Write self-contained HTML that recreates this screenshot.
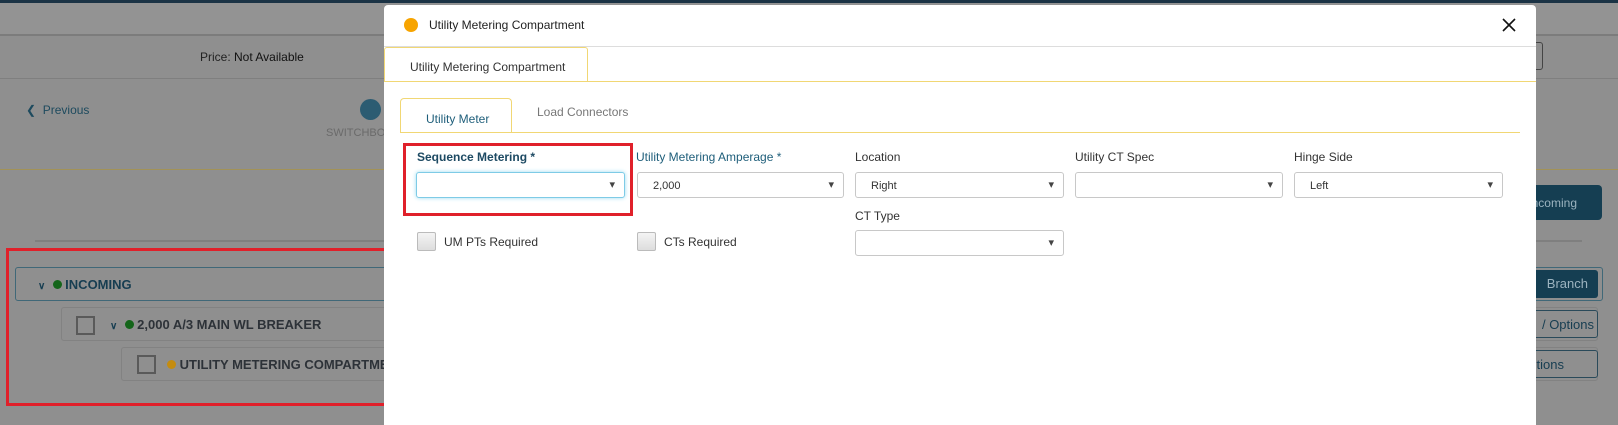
<!DOCTYPE html>
<html><head><meta charset="utf-8"><style>
*{box-sizing:border-box;margin:0;padding:0}
body{width:1618px;height:412px;overflow:hidden;position:relative;background:#8f8f8f;font-family:"Liberation Sans",sans-serif}
.a{position:absolute}
.lbl{position:absolute;font-size:12px;color:#333;line-height:14px}
.sel{position:absolute;height:26px;border:1px solid #c8c8c8;border-radius:3px;background:#fff;font-size:11px;color:#333;padding:7px 0 0 15px}
.sel:after{content:"▾";position:absolute;right:9px;top:5px;font-size:11px;color:#444}
.cb{position:absolute;width:19px;height:19px;border:1px solid #bbb;border-radius:2px;background:linear-gradient(#f4f4f4,#ddd)}
.row{position:absolute;border:1px solid #858585;border-radius:3px;font-weight:bold;font-size:13px;color:#2d3238}
.dot{display:inline-block;width:9px;height:9px;border-radius:50%}
.pb{position:absolute;width:19px;height:19px;border:2px solid #5a5a5a}
.btn{position:absolute;text-align:right;font-size:13px;border-radius:3px}
</style></head><body>
<div class="a" style="left:0;top:0;width:1618px;height:3px;background:#1b3345"></div>
<div class="a" style="left:0;top:3px;width:1618px;height:33px;background:#939393;border-bottom:2px solid #7c7c7c"></div>
<div class="a" style="left:200px;top:50px;font-size:12px;color:#222">Price: <span style="color:#111">Not Available</span></div>
<div class="a" style="left:0;top:78px;width:1618px;height:1px;background:#7f7f7f"></div>
<div class="a" style="left:1520px;top:42px;width:23px;height:28px;border:1px solid #444;border-radius:3px"></div>
<div class="a" style="left:26px;top:103px;font-size:12px;color:#1d4a5e">❮&nbsp; Previous</div>
<div class="a" style="left:360px;top:99px;width:21px;height:21px;border-radius:50%;background:#2c5c72"></div>
<div class="a" style="left:326px;top:127px;font-size:11px;color:#6a6a6a">SWITCHBOARD</div>
<div class="a" style="left:0;top:169px;width:1618px;height:1px;background:#a29257"></div>
<div class="a" style="left:35px;top:240px;width:1547px;height:2px;background:#7f7f7f"></div>
<div class="btn" style="left:1500px;top:185px;width:102px;height:35px;background:#153e52;border-radius:4px;color:#9cb3bf;font-size:12px;padding:11px 25px 0 0">Incoming</div>
<div class="row" style="left:15px;top:267px;width:1588px;height:34px;border-color:#406878;color:#163d51;padding:9px 0 0 22px"><span style="font-size:10px">∨</span>&nbsp;&nbsp;<span class="dot" style="background:#14651a"></span> INCOMING</div>
<div class="btn" style="left:1490px;top:270px;width:108px;height:28px;background:#153e52;color:#9cb3bf;padding:6px 10px 0 0">Branch</div>
<div class="row" style="left:61px;top:307px;width:1537px;height:34px;border-color:#828282;padding:9px 0 0 48px"><span style="font-size:10px;color:#163d51">∨</span>&nbsp;&nbsp;<span class="dot" style="background:#14651a"></span> 2,000 A/3 MAIN WL BREAKER</div>
<div class="pb" style="left:76px;top:316px"></div>
<div class="btn" style="left:1470px;top:310px;width:128px;height:28px;border:1px solid #2a4a5a;color:#163d51;padding:6px 3px 0 0">/ Options</div>
<div class="row" style="left:121px;top:347px;width:1477px;height:34px;border-color:#828282;padding:9px 0 0 45px"><span class="dot" style="background:#c48c10"></span> UTILITY METERING COMPARTMENT</div>
<div class="pb" style="left:137px;top:355px"></div>
<div class="btn" style="left:1450px;top:350px;width:148px;height:28px;border:1px solid #2a4a5a;color:#163d51;padding:6px 33px 0 0">Options</div>
<div class="a" style="left:6px;top:248px;width:404px;height:158px;border:3px solid #e0202a"></div>

<div class="a" style="left:384px;top:5px;width:1152px;height:420px;background:#fff;border-radius:4px 4px 0 0">
 <div class="a" style="left:20px;top:13px;width:14px;height:14px;border-radius:50%;background:#f7a400"></div>
 <div class="a" style="left:45px;top:13px;font-size:12px;color:#222">Utility Metering Compartment</div>
 <svg class="a" style="left:1118px;top:13px" width="14" height="14" viewBox="0 0 14 14"><path d="M1 1L13 13M13 1L1 13" stroke="#111" stroke-width="1.6" fill="none"/></svg>
 <div class="a" style="left:0;top:41px;width:1152px;height:1px;background:#ddd"></div>
 <div class="a" style="left:0;top:42px;width:204px;height:35px;border:1px solid #f1d774;border-bottom:none;border-radius:3px 3px 0 0;background:#fff;font-size:12px;color:#333;padding:12px 0 0 25px">Utility Metering Compartment</div>
 <div class="a" style="left:0;top:76px;width:1152px;height:1px;background:#f1d774"></div>
 <div class="a" style="left:16px;top:93px;width:112px;height:35px;border:1px solid #f1d774;border-bottom:none;border-radius:4px 4px 0 0;font-size:12px;color:#1e5e7a;padding:13px 0 0 25px">Utility Meter</div>
 <div class="a" style="left:153px;top:100px;font-size:12px;color:#777">Load Connectors</div>
 <div class="a" style="left:16px;top:127px;width:1120px;height:1px;background:#f1d774"></div>
 <div class="lbl" style="left:33px;top:145px;color:#1d4a63;font-weight:bold">Sequence Metering *</div>
 <div class="sel" style="left:32px;top:167px;width:209px;border-color:#7ecbe6;box-shadow:0 0 4px #9bdcf0"></div>
 <div class="lbl" style="left:252px;top:145px;color:#1e5e7a">Utility Metering Amperage *</div>
 <div class="sel" style="left:253px;top:167px;width:207px">2,000</div>
 <div class="lbl" style="left:471px;top:145px">Location</div>
 <div class="sel" style="left:471px;top:167px;width:209px">Right</div>
 <div class="lbl" style="left:691px;top:145px">Utility CT Spec</div>
 <div class="sel" style="left:691px;top:167px;width:208px"></div>
 <div class="lbl" style="left:910px;top:145px">Hinge Side</div>
 <div class="sel" style="left:910px;top:167px;width:209px">Left</div>
 <div class="lbl" style="left:471px;top:204px">CT Type</div>
 <div class="sel" style="left:471px;top:225px;width:209px"></div>
 <div class="cb" style="left:33px;top:227px"></div>
 <div class="lbl" style="left:60px;top:230px">UM PTs Required</div>
 <div class="cb" style="left:253px;top:227px"></div>
 <div class="lbl" style="left:280px;top:230px">CTs Required</div>
 <div class="a" style="left:19px;top:138px;width:230px;height:73px;border:3px solid #e0202a"></div>
</div>
</body></html>
